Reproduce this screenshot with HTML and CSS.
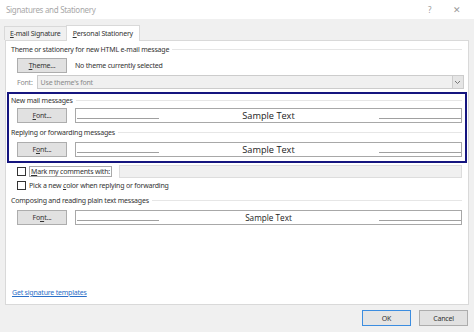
FILE: index.html
```html
<!DOCTYPE html>
<html>
<head>
<meta charset="utf-8">
<link rel="stylesheet" href="styles.css">
</head>
<body>
<div class="dialog">
  <div class="titlebar">
    <span class="title">Signatures and Stationery</span>
    <span class="tb-icons"><span class="help">?</span><span class="close">&#x2715;</span></span>
  </div>
  <div class="tabs">
    <div class="tab"><u>E</u>-mail Signature</div>
    <div class="tab active"><u>P</u>ersonal Stationery</div>
  </div>
  <div class="panel">
    <div class="group-label"><span>Theme or stationery for new HTML e-mail message</span></div>
    <div class="row theme-row">
      <div class="btn"><u>T</u>heme...</div>
      <span class="note">No theme currently selected</span>
    </div>
    <div class="row font-row">
      <span class="dim">Font:</span>
      <div class="select"><span>Use theme's font</span><span class="arrow"><svg width="7" height="5" viewBox="0 0 7 5"><path d="M1 1 L3.5 3.5 L6 1" fill="none" stroke="#777" stroke-width="1"/></svg></span></div>
    </div>
    <div class="highlight">
      <div class="group-label"><span>New mail messages</span></div>
      <div class="row sample-row first-sample">
        <div class="btn"><u>F</u>ont...</div>
        <div class="sample"><i class="ln left"></i><span>Sample Text</span><i class="ln right"></i></div>
      </div>
      <div class="group-label"><span>Replying or forwarding messages</span></div>
      <div class="row sample-row second-sample">
        <div class="btn">F<u>o</u>nt...</div>
        <div class="sample"><i class="ln left"></i><span>Sample Text</span><i class="ln right"></i></div>
      </div>
    </div>
    <div class="row check-row first">
      <span class="cb"></span>
      <span class="focus"><u>M</u>ark my comments with:</span>
      <div class="field"></div>
    </div>
    <div class="row check-row">
      <span class="cb"></span>
      <span class="txt">Pick a new <u>c</u>olor when replying or forwarding</span>
    </div>
    <div class="group-label plain"><span>Composing and reading plain text messages</span></div>
    <div class="row sample-row plain-sample">
      <div class="btn">Fo<u>n</u>t...</div>
      <div class="sample small"><i class="ln left"></i><span>Sample Text</span><i class="ln right"></i></div>
    </div>
    <div class="spacer"></div>
    <a class="link">Get signature templates</a>
  </div>
  <div class="footer">
    <div class="btn ok">OK</div>
    <div class="btn">Cancel</div>
  </div>
</div>
</body>
</html>
```
FILE: styles.css
```css
* { box-sizing: border-box; }
html, body { margin: 0; padding: 0; }
body {
  width: 474px; height: 332px; overflow: hidden;
  background: #f0f0f0;
  font-family: "Noto Sans", "Open Sans", sans-serif;
  font-size: 7px;
  letter-spacing: -0.2px;
  color: #333;
  white-space: nowrap;
}
.dialog { width: 474px; height: 332px; display: flex; flex-direction: column; }
.titlebar {
  height: 19px; background: #fff; display: flex; align-items: center;
  justify-content: space-between; padding: 0 13px 0 6px;
}
.title { color: #a8a8a8; font-size: 8px; letter-spacing: -0.3px; }
.tb-icons { display: flex; gap: 22px; color: #999; font-size: 8px; align-items: center; }
.close { font-size: 9px; }
.tabs { height: 21px; display: flex; align-items: flex-end; padding-left: 4px; }
.tab {
  height: 14px; padding: 0 5px; display: flex; align-items: center;
  border: 1px solid #d9d9d9; border-bottom: none; background: #f0f0f0; color: #333;
  margin-right: -1px;
}
.tab.active { height: 16px; background: #fff; padding: 0 6px; position: relative; top: 1px; }
u { text-decoration: underline; }
.panel {
  margin: 0 5px; height: 265px; background: #fff; border: 1px solid #d9d9d9;
  display: flex; flex-direction: column; padding: 3px 0 0 0;
}
.group-label { display: flex; align-items: center; height: 11px; padding: 0 6px 0 5px; color: #333; }
.group-label::after { content: ""; flex: 1; height: 1px; background: #e6e6e6; margin-left: 3px; }
.row { display: flex; align-items: center; }
.btn {
  width: 50px; height: 15px; background: #e1e1e1; border: 1px solid #adadad;
  display: flex; align-items: center; justify-content: center; color: #333; flex-shrink: 0;
}
.theme-row { margin: 3px 0 0 11px; gap: 8px; }
.font-row { margin: 2px 0 0 11px; gap: 4px; }
.dim { color: #8a8a8a; }
.select {
  width: 427px; height: 14px; background: #f0f0f0; border: 1px solid #ccc;
  display: flex; align-items: center; justify-content: space-between; padding-left: 3px; color: #8a8a8a;
}
.arrow {
  width: 11px; height: 12px; background: #e5e5e5; border-left: 1px solid #ccc;
  display: flex; align-items: center; justify-content: center;
}
.highlight {
  margin: 3px 1px 0 1px; height: 71px; border: 2px solid #15157f; padding-top: 1px;
}
.highlight .group-label { padding-left: 2px; padding-right: 3px; }
.highlight .sample-row { margin-left: 8px; }
.first-sample { margin-top: 2px; margin-bottom: 4px; }
.second-sample { margin-top: 4px; }
.sample-row { gap: 8px; margin-left: 11px; }
.sample {
  width: 387px; height: 15px; border: 1px solid #a8a8a8; position: relative;
  display: flex; align-items: center; justify-content: center;
  font-family: "Open Sans", sans-serif; font-size: 9.2px; letter-spacing: 0; color: #222;
}
.sample.small { font-size: 8.2px; }
.ln { position: absolute; height: 1px; background: #a0a0a0; bottom: 3px; }
.ln.left { left: 1px; width: 82px; }
.ln.right { right: 0; width: 82px; }
.check-row { margin-left: 11px; gap: 3px; height: 14px; }
.check-row.first { margin-top: 1px; margin-right: 6px; }
.cb { width: 9px; height: 9px; border: 1px solid #333; background: #fff; flex-shrink: 0; }
.focus { border: 1px solid #aaa; padding: 0 1px; height: 11px; line-height: 9px; display: inline-block; flex-shrink: 0; }
.field { margin-left: 4px; flex: 1; height: 13px; background: #f0f0f0; border: 1px solid #ddd; }
.plain { margin-top: 3px; }
.plain-sample { margin-top: 4px; }
.spacer { flex: 1; }
.link { color: #2b6fc7; text-decoration: underline; margin: 0 0 7px 6px; }
.footer { flex: 1; display: flex; justify-content: flex-end; align-items: flex-start; gap: 8px; padding: 5px 6px 0 0; }
.footer .btn { width: 49px; height: 16px; }
.footer .btn.ok { border: 1px solid #3c8de0; background: #e5e5e5; }
```
